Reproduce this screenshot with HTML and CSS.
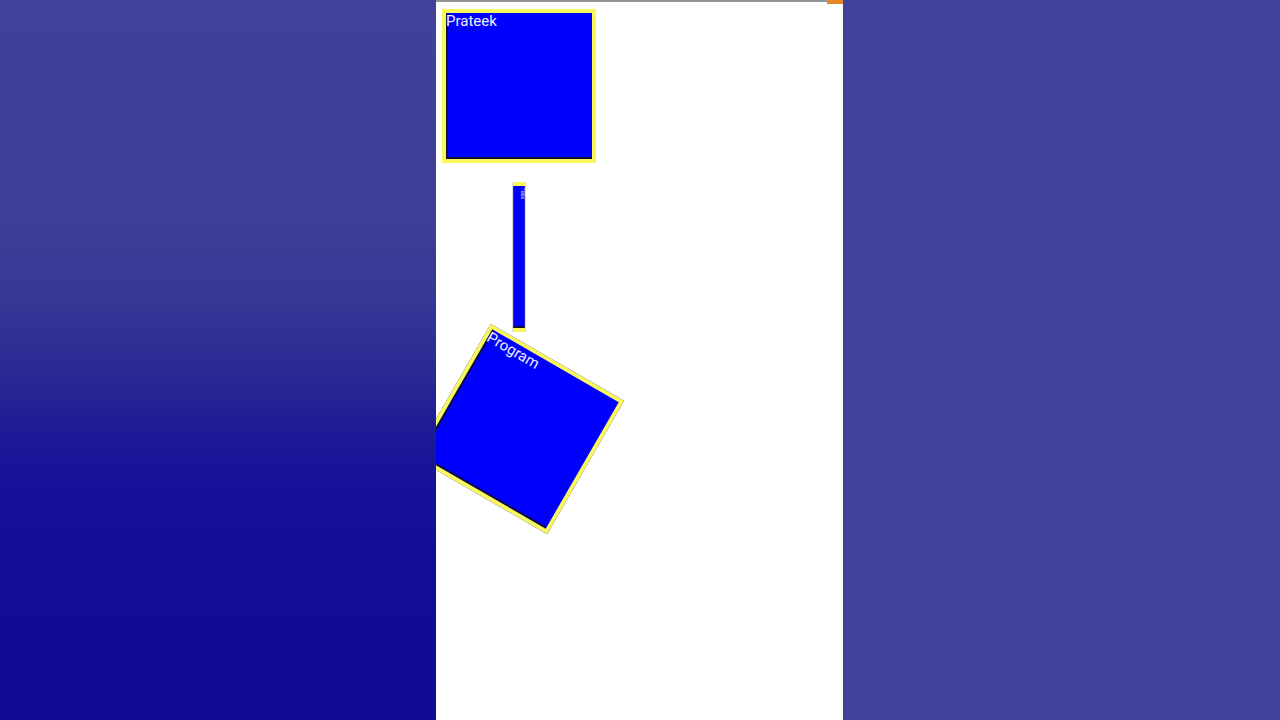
FILE: index.html
```html
<!DOCTYPE html>
<html>
<head>
<meta charset="utf-8">
<link rel="stylesheet" href="styles.css">
</head>
<body>
<div class="side side-left"></div>
<div class="phone">
  <div class="statusbar"><span class="status-accent"></span></div>
  <div class="box box-first"><span class="label">Prateek</span></div>
  <div class="box box-flip"><span class="label">Prateek</span></div>
  <div class="box box-turn"><span class="label">Program</span></div>
</div>
<div class="side side-right"></div>
</body>
</html>
```
FILE: styles.css
```css
html, body {
  margin: 0;
  padding: 0;
  width: 1280px;
  height: 720px;
  overflow: hidden;
}
body {
  display: flex;
  flex-direction: row;
  font-family: Roboto, "Liberation Sans", sans-serif;
}
.side {
  height: 720px;
}
.side-left {
  width: 436px;
  background: linear-gradient(to bottom, #41419a 0%, #3f3f97 30%, #363696 42%, #2a2994 52%, #1d1a96 60%, #15119a 68%, #110d98 78%, #100c96 100%);
}
.side-right {
  width: 437px;
  background: #41419a;
}
.phone {
  width: 407px;
  height: 720px;
  background: #ffffff;
  display: flex;
  flex-direction: column;
  align-items: flex-start;
  overflow: hidden;
}
.statusbar {
  width: 100%;
  height: 2px;
  background: #8f949a;
  display: flex;
  justify-content: flex-end;
  flex-shrink: 0;
}
.status-accent {
  width: 16px;
  height: 4px;
  background: #e8872a;
}
.box {
  box-sizing: border-box;
  width: 154px;
  height: 154px;
  flex-shrink: 0;
  background: #0000ff;
  border: 4px solid #f8f85a;
  box-shadow: inset 2px -2px 0 #101030;
  margin-left: 6px;
}
.label {
  display: block;
  color: #eef0ff;
  font-size: 15px;
  line-height: 17px;
}
.box-first {
  margin-top: 7px;
}
.box-flip {
  margin-top: 19px;
  height: 150px;
  transform: scaleX(-0.08);
}
.box-turn {
  margin-top: 20px;
  transform: rotate(30deg);
}
```
